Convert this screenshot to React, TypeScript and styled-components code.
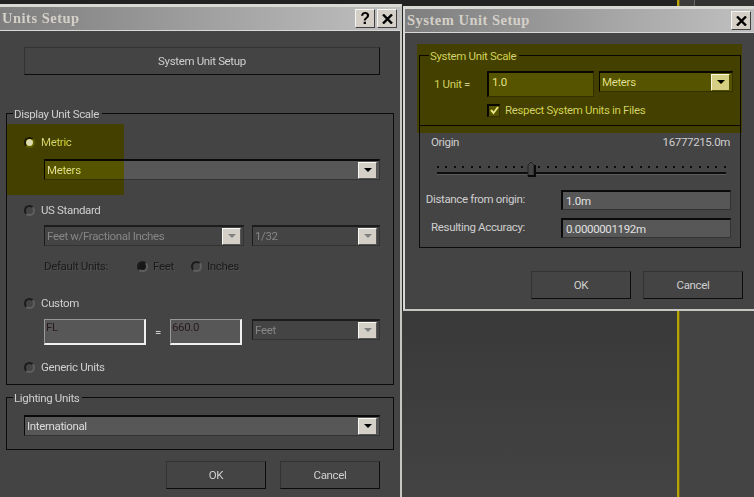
import React from "react";
import styled, { createGlobalStyle } from "styled-components";

const GlobalStyle = createGlobalStyle`
  html, body {
    margin: 0;
    padding: 0;
    height: 100%;
    overflow: hidden;
    background: #222;
  }
  #root {
    height: 100%;
  }
`;

const UI_FONT = `Roboto, "Liberation Sans", sans-serif`;

const Desktop = styled.div`
  display: flex;
  width: 754px;
  height: 497px;
  overflow: hidden;
  background: #222;
  font-family: ${UI_FONT};
  font-size: 11.5px;
  letter-spacing: -0.35px;
  color: #cfcfcf;
`;

const UnitsWindow = styled.div`
  position: relative;
  flex: none;
  display: flex;
  flex-direction: column;
  width: 402px;
  margin-top: 4px;
  box-sizing: border-box;
  border-top: 3px solid #d8d8d4;
  border-right: 2px solid #c6c6c2;
  background: #444;
`;

const SetupColumn = styled.div`
  flex: 1;
  display: flex;
  flex-direction: column;
  min-width: 0;
`;

const SetupWindow = styled.div`
  position: relative;
  flex: none;
  display: flex;
  flex-direction: column;
  height: 305px;
  margin-left: 1px;
  box-sizing: border-box;
  border-top: 3px solid #d8d8d4;
  border-left: 2px solid #d8d8d4;
  border-bottom: 2px solid #c6c6c2;
  background: #444;
`;

const TitleBar = styled.div`
  flex: none;
  display: flex;
  align-items: center;
  justify-content: space-between;
  height: 23px;
  padding: 0 3px 0 2px;
  border-bottom: 1px solid #d8d8d4;
  background: linear-gradient(90deg, #7e7e7e 0%, #c0c0c0 100%);
`;

const TitleText = styled.div`
  font-family: "Liberation Serif", serif;
  font-weight: 700;
  font-size: 14.5px;
  letter-spacing: 0.5px;
  color: #d4d0c8;
`;

const TitleButtons = styled.div`
  display: flex;
  gap: 2px;
`;

const TitleButton = styled.div`
  box-sizing: border-box;
  width: 20px;
  height: 19px;
  display: flex;
  align-items: center;
  justify-content: center;
  background: #d4d0c8;
  border: 1px solid;
  border-color: #f4f4f0 #404040 #404040 #f4f4f0;
  color: #000;
  font-family: "Liberation Sans", sans-serif;
  font-weight: 700;
  font-size: 16px;
  line-height: 1;
`;

const UnitsBody = styled.div`
  flex: 1;
  display: flex;
  flex-direction: column;
  padding: 16px 6px 0;
`;

const SetupBody = styled.div`
  flex: 1;
  display: flex;
  flex-direction: column;
  padding: 22px 0 0 14px;
`;

const PushButton = styled.div<{ $width: number; $left?: number }>`
  box-sizing: border-box;
  flex: none;
  width: ${(p) => p.$width}px;
  height: 28px;
  margin-left: ${(p) => p.$left ?? 0}px;
  display: flex;
  align-items: center;
  justify-content: center;
  border: 1px solid;
  border-color: #333 #0c0c0c #0c0c0c #333;
  background: #444;
  color: #cfcfcf;
`;

const Group = styled.div<{ $top?: number; $height: number }>`
  position: relative;
  box-sizing: border-box;
  flex: none;
  width: 388px;
  height: ${(p) => p.$height}px;
  margin-top: ${(p) => p.$top ?? 0}px;
  border: 1px solid #0c0c0c;
  display: flex;
  flex-direction: column;
  padding-left: 17px;
`;

const GroupLabel = styled.div<{ $left?: number }>`
  position: absolute;
  top: -7px;
  left: ${(p) => p.$left ?? 6}px;
  padding: 0 3px 0 1px;
  background: #444;
  line-height: 15px;
  white-space: nowrap;
`;

const Row = styled.div<{ $top?: number; $indent?: number; $gap?: number; $height?: number }>`
  flex: none;
  display: flex;
  align-items: center;
  margin-top: ${(p) => p.$top ?? 0}px;
  margin-left: ${(p) => p.$indent ?? 0}px;
  gap: ${(p) => p.$gap ?? 0}px;
  ${(p) => (p.$height ? `height: ${p.$height}px;` : "")}
`;

const RadioRow = styled.div<{ $top: number }>`
  flex: none;
  display: flex;
  align-items: center;
  gap: 6px;
  height: 20px;
  margin-top: ${(p) => p.$top}px;
`;

const RadioDot = styled.span<{ $mark?: "light" | "dark" }>`
  flex: none;
  box-sizing: border-box;
  width: 11px;
  height: 11px;
  border-radius: 50%;
  border: 2px solid;
  border-color: #1c1c1c #5e5e5e #5e5e5e #1c1c1c;
  background: ${(p) =>
    p.$mark === "light" ? "#dcdcdc" : p.$mark === "dark" ? "#161616" : "#444"};
`;

const Muted = styled.span<{ $width?: number; $left?: number }>`
  color: #1a1a1a;
  text-shadow: 1px 1px 0 #505050;
  ${(p) => (p.$width ? `width: ${p.$width}px;` : "")}
  margin-left: ${(p) => p.$left ?? 0}px;
`;

const ComboBox = styled.div<{ $width: number; $disabled?: boolean; $left?: number }>`
  box-sizing: border-box;
  flex: none;
  align-self: flex-start;
  width: ${(p) => p.$width}px;
  height: 21px;
  margin-left: ${(p) => p.$left ?? 0}px;
  display: flex;
  align-items: center;
  justify-content: space-between;
  padding: 0 2px 0 2px;
  border-style: solid;
  border-width: 2px 1px 1px 1px;
  border-color: ${(p) =>
    p.$disabled ? "#1c1c1c #333 #333 #1c1c1c" : "#0a0a0a #333 #333 #0a0a0a"};
  background: ${(p) => (p.$disabled ? "#444" : "#575757")};
  color: ${(p) => (p.$disabled ? "#868686" : "#dcdcdc")};
`;

const DropButton = styled.span`
  flex: none;
  box-sizing: border-box;
  width: 19px;
  height: 17px;
  display: flex;
  align-items: center;
  justify-content: center;
  background: #d4d0c8;
  border: 1px solid;
  border-color: #f8f8f4 #555 #555 #f8f8f4;
`;

const DropArrow = styled.span<{ $disabled?: boolean }>`
  width: 0;
  height: 0;
  border-style: solid;
  border-width: 4px 4px 0 4px;
  border-color: ${(p) => (p.$disabled ? "#808080" : "#000")} transparent transparent;
`;

const Combo = ({
  width,
  value,
  disabled,
  left,
}: {
  width: number;
  value: string;
  disabled?: boolean;
  left?: number;
}) => (
  <ComboBox $width={width} $disabled={disabled} $left={left}>
    <span>{value}</span>
    <DropButton>
      <DropArrow $disabled={disabled} />
    </DropButton>
  </ComboBox>
);

const CustomField = styled.div<{ $width: number }>`
  box-sizing: border-box;
  flex: none;
  width: ${(p) => p.$width}px;
  height: 26px;
  padding-left: 1px;
  border: 1px solid;
  border-color: #989898 #f0f0f0 #f0f0f0 #989898;
  border-width: 1px 2px 2px 1px;
  background: #575757;
  color: #2a1a22;
  line-height: 14px;
`;

const EqualsSign = styled.span`
  width: 24px;
  text-align: center;
`;

const EditField = styled.div<{ $width: number; $height: number }>`
  box-sizing: border-box;
  flex: none;
  width: ${(p) => p.$width}px;
  height: ${(p) => p.$height}px;
  display: flex;
  align-items: center;
  padding: 0 0 ${(p) => p.$height - 20}px 3px;
  border-style: solid;
  border-width: 2px 1px 1px 2px;
  border-color: #0a0a0a #333 #333 #0a0a0a;
  background: #575757;
  color: #e0e0e0;
`;

const DialogActions = styled.div<{ $top: number; $gap: number; $left: number }>`
  flex: none;
  display: flex;
  gap: ${(p) => p.$gap}px;
  margin-top: ${(p) => p.$top}px;
  margin-left: ${(p) => p.$left}px;
`;

const Highlight = styled.div<{ $left: number; $top: number; $width: number; $height: number }>`
  position: absolute;
  left: ${(p) => p.$left}px;
  top: ${(p) => p.$top}px;
  width: ${(p) => p.$width}px;
  height: ${(p) => p.$height}px;
  background: #fffb73;
  mix-blend-mode: color-burn;
  pointer-events: none;
`;

const ScaleGroup = styled.div`
  position: relative;
  box-sizing: border-box;
  flex: none;
  width: 322px;
  height: 70px;
  padding: 15px 0 0 14px;
  border: 1px solid #0c0c0c;
  border-bottom: none;
`;

const OriginGroup = styled.div`
  box-sizing: border-box;
  flex: none;
  width: 322px;
  height: 123px;
  padding-top: 9px;
  border: 1px solid #0c0c0c;
`;

const UnitLabel = styled.span`
  width: 53px;
`;

const CheckBox = styled.span`
  flex: none;
  box-sizing: border-box;
  width: 13px;
  height: 13px;
  display: flex;
  align-items: center;
  justify-content: center;
  border-style: solid;
  border-width: 2px 1px 1px 2px;
  border-color: #0a0a0a #333 #333 #0a0a0a;
  background: #575757;
`;

const OriginHeader = styled.div`
  display: flex;
  justify-content: space-between;
  padding: 0 10px 0 11px;
  line-height: 15px;
`;

const Slider = styled.div`
  position: relative;
  height: 20px;
  margin: 16px 14px 0 17px;
`;

const TickRow = styled.div`
  display: flex;
  justify-content: space-between;
`;

const Tick = styled.span`
  width: 2px;
  height: 2px;
  background: #0c0c0c;
`;

const SliderTrack = styled.div`
  margin-top: 4px;
  height: 2px;
  background: #0c0c0c;
  border-bottom: 1px solid #5c5c5c;
`;

const SliderThumb = styled.svg`
  position: absolute;
  left: 90px;
  top: -5px;
`;

const ReadoutRow = styled.div<{ $top: number }>`
  display: flex;
  align-items: center;
  margin-top: ${(p) => p.$top}px;
`;

const ReadoutLabel = styled.span`
  flex: none;
  width: 105px;
  margin-right: 36px;
  padding-bottom: 3px;
  text-align: right;
  white-space: nowrap;
`;

const ViewportRow = styled.div<{ $height?: number }>`
  display: flex;
  ${(p) => (p.$height ? `height: ${p.$height}px; flex: none;` : "flex: 1;")}
`;

const ViewportPane = styled.div<{ $dark?: boolean }>`
  flex: none;
  width: 275px;
  background: ${(p) => (p.$dark ? "#222" : "linear-gradient(180deg, #393939 0%, #434343 100%)")};
`;

const GuideLine = styled.div`
  flex: none;
  width: 2px;
  background: #b8a400;
  border-right: 1px solid #6e5f20;
`;

const SidePane = styled.div<{ $rule?: boolean }>`
  flex: 1;
  background: ${(p) =>
    p.$rule ? "linear-gradient(90deg, #3c3c3c 14px, #666 14px, #666 15px, #333 15px)" : "#444"};
`;

const CheckMark = () => (
  <svg width="9" height="9" viewBox="0 0 9 9">
    <path d="M1 4 L3.5 7 L8 1" fill="none" stroke="#e4e4d0" strokeWidth="2" />
  </svg>
);

const CloseGlyph = () => (
  <svg width="11" height="10" viewBox="0 0 11 10">
    <path d="M1 0.5 L10 9.5 M10 0.5 L1 9.5" stroke="#000" strokeWidth="2.4" />
  </svg>
);

function App() {
  return (
    <>
      <GlobalStyle />
      <Desktop>
        <UnitsWindow>
          <TitleBar>
            <TitleText>Units Setup</TitleText>
            <TitleButtons>
              <TitleButton>?</TitleButton>
              <TitleButton>
                <CloseGlyph />
              </TitleButton>
            </TitleButtons>
          </TitleBar>
          <UnitsBody>
            <PushButton $width={356} $left={18}>
              System Unit Setup
            </PushButton>

            <Group $top={38} $height={272}>
              <GroupLabel>Display Unit Scale</GroupLabel>
              <RadioRow $top={18}>
                <RadioDot $mark="light" />
                <span>Metric</span>
              </RadioRow>
              <Row $top={7} $indent={20}>
                <Combo width={336} value="Meters" />
              </Row>
              <RadioRow $top={20}>
                <RadioDot />
                <span>US Standard</span>
              </RadioRow>
              <Row $top={5} $indent={20} $gap={8}>
                <Combo width={200} value="Feet w/Fractional Inches" disabled />
                <Combo width={128} value="1/32" disabled />
              </Row>
              <Row $top={10} $indent={20} $height={20}>
                <Muted $width={93}>Default Units:</Muted>
                <RadioDot $mark="dark" />
                <Muted $width={38} $left={5}>
                  Feet
                </Muted>
                <RadioDot />
                <Muted $left={5}>Inches</Muted>
              </Row>
              <RadioRow $top={17}>
                <RadioDot />
                <span>Custom</span>
              </RadioRow>
              <Row $top={6} $indent={20} $height={26}>
                <CustomField $width={102}>FL</CustomField>
                <EqualsSign>=</EqualsSign>
                <CustomField $width={72}>660.0</CustomField>
                <Combo width={128} value="Feet" disabled left={10} />
              </Row>
              <RadioRow $top={12}>
                <RadioDot />
                <span>Generic Units</span>
              </RadioRow>
            </Group>

            <Group $top={12} $height={53}>
              <GroupLabel>Lighting Units</GroupLabel>
              <Row $top={17}>
                <Combo width={356} value="International" />
              </Row>
            </Group>

            <DialogActions $top={11} $gap={14} $left={160}>
              <PushButton $width={100}>OK</PushButton>
              <PushButton $width={100}>Cancel</PushButton>
            </DialogActions>
          </UnitsBody>
          <Highlight $left={7} $top={117} $width={117} $height={71} />
        </UnitsWindow>

        <SetupColumn>
          <ViewportRow $height={6}>
            <ViewportPane $dark />
            <GuideLine />
            <SidePane $rule />
          </ViewportRow>
          <SetupWindow>
            <TitleBar>
              <TitleText>System Unit Setup</TitleText>
              <TitleButton>
                <CloseGlyph />
              </TitleButton>
            </TitleBar>
            <SetupBody>
              <ScaleGroup>
                <GroupLabel $left={9}>System Unit Scale</GroupLabel>
                <Row $height={26}>
                  <UnitLabel>1 Unit =</UnitLabel>
                  <EditField $width={107} $height={26}>
                    1.0
                  </EditField>
                  <Combo width={134} value="Meters" left={5} />
                </Row>
                <Row $top={6} $indent={53} $gap={5} $height={14}>
                  <CheckBox>
                    <CheckMark />
                  </CheckBox>
                  <span>Respect System Units in Files</span>
                </Row>
              </ScaleGroup>
              <OriginGroup>
                <OriginHeader>
                  <span>Origin</span>
                  <span>16777215.0m</span>
                </OriginHeader>
                <Slider>
                  <TickRow>
                    {Array.from({ length: 35 }, (_, i) => (
                      <Tick key={i} />
                    ))}
                  </TickRow>
                  <SliderTrack />
                  <SliderThumb width="9" height="16" viewBox="0 0 9 16">
                    <path d="M1 15 V4 L4 1 L7 4 V15 Z" fill="#444" stroke="#222" strokeWidth="1" />
                    <path d="M1 15 H8 V4" fill="none" stroke="#0a0a0a" strokeWidth="2" />
                  </SliderThumb>
                </Slider>
                <ReadoutRow $top={4}>
                  <ReadoutLabel>Distance from origin:</ReadoutLabel>
                  <EditField $width={170} $height={20}>
                    1.0m
                  </EditField>
                </ReadoutRow>
                <ReadoutRow $top={8}>
                  <ReadoutLabel>Resulting Accuracy:</ReadoutLabel>
                  <EditField $width={170} $height={20}>
                    0.0000001192m
                  </EditField>
                </ReadoutRow>
              </OriginGroup>
              <DialogActions $top={23} $gap={12} $left={112}>
                <PushButton $width={100}>OK</PushButton>
                <PushButton $width={100}>Cancel</PushButton>
              </DialogActions>
            </SetupBody>
            <Highlight $left={12} $top={35} $width={325} $height={89} />
          </SetupWindow>
          <ViewportRow>
            <ViewportPane />
            <GuideLine />
            <SidePane />
          </ViewportRow>
        </SetupColumn>
      </Desktop>
    </>
  );
}

export default App;
